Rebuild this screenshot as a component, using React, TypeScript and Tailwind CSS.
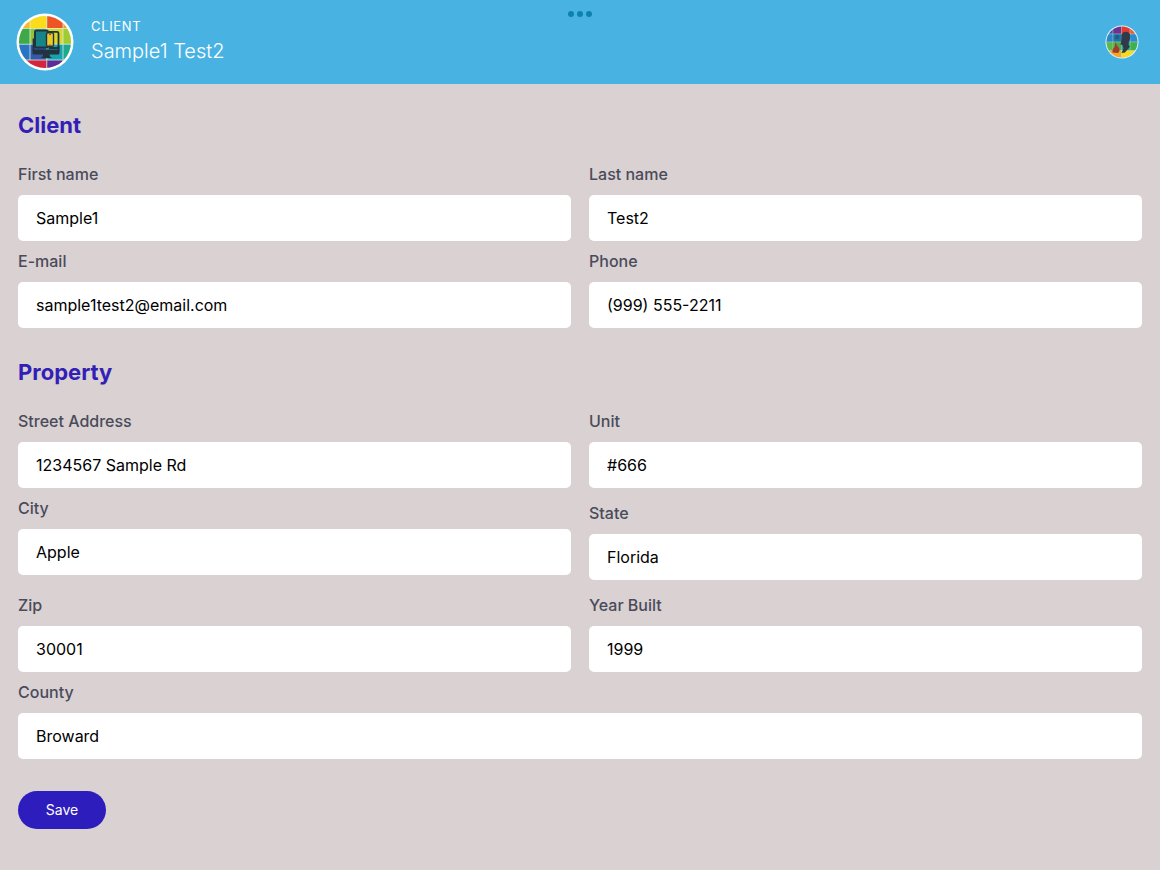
import { useId, useState } from 'react';

type FieldProps = {
  label: string;
  initial: string;
  type?: string;
  className?: string;
};

function Field({ label, initial, type = 'text', className = '' }: FieldProps) {
  const id = useId();
  const [value, setValue] = useState(initial);
  return (
    <div className={`flex flex-col gap-[9px] ${className}`}>
      <label htmlFor={id} className="text-base leading-6 font-medium text-[#4a4b5a]">
        {label}
      </label>
      <input
        id={id}
        type={type}
        value={value}
        onChange={(e) => setValue(e.target.value)}
        className="h-[46px] w-full rounded-[5px] bg-white px-[18px] text-base text-black outline-none focus:ring-2 focus:ring-[#2e1dbd]"
      />
    </div>
  );
}

function ClientLogo() {
  return (
    <svg viewBox="0 0 58 58" className="size-[58px] shrink-0" role="img" aria-label="Client logo">
      <defs>
        <clipPath id="client-logo-clip">
          <circle cx="29" cy="29" r="26" />
        </clipPath>
      </defs>
      <circle cx="29" cy="29" r="28.5" fill="#fff" />
      <g clipPath="url(#client-logo-clip)">
        <rect width="58" height="58" fill="#d9efe0" />
        <rect x="0" y="0" width="13.6" height="15" fill="#f9b81c" />
        <rect x="14.4" y="0" width="16" height="15" fill="#fbdc1c" />
        <rect x="31.2" y="0" width="15.4" height="15" fill="#ee5525" />
        <rect x="47.4" y="0" width="11" height="15" fill="#f59a23" />
        <rect x="0" y="15.8" width="13.6" height="15" fill="#3fa948" />
        <rect x="14.4" y="15.8" width="16" height="15" fill="#8dc63a" />
        <rect x="31.2" y="15.8" width="15.4" height="15" fill="#d8d92c" />
        <rect x="47.4" y="15.8" width="11" height="15" fill="#a0cb32" />
        <rect x="0" y="31.6" width="13.6" height="15" fill="#2a75c3" />
        <rect x="14.4" y="31.6" width="16" height="15" fill="#3359a8" />
        <rect x="31.2" y="31.6" width="15.4" height="15" fill="#16a3ad" />
        <rect x="47.4" y="31.6" width="11" height="15" fill="#20a88f" />
        <rect x="0" y="47.4" width="30.4" height="11" fill="#d5243f" />
        <rect x="31.2" y="47.4" width="15.4" height="11" fill="#5a2f97" />
        <rect x="47.4" y="47.4" width="11" height="11" fill="#7b2f97" />
      </g>
      <rect x="19" y="17.5" width="13" height="17" rx="1.5" fill="#15858a" stroke="#22333f" strokeWidth="2" />
      <path d="M33 18.8h8a1.5 1.5 0 0 1 1.5 1.5V35H33" fill="none" stroke="#22333f" strokeWidth="1.8" />
      <path d="M19 26.5h-1.500v11M42.500 33v5" fill="none" stroke="#22333f" strokeWidth="1.800" />
      <path d="M16.500 36.500h27v3.500a1.500 1.500 0 0 1-1.500 1.500h-8.500l.7 2.200 2 1.300H24.500l2-1.300.7-2.200H18a1.500 1.500 0 0 1-1.500-1.500z" fill="#22333f" />
      <rect x="30.500" y="19.800" width="7" height="13.500" rx="1.300" fill="#ecc926" stroke="#22333f" strokeWidth="1.400" />
      <path d="M33 21.600h2M33.500 31.600h1" stroke="#22333f" strokeWidth=".7" />
    </svg>
  );
}

function ProfilePicture() {
  return (
    <svg viewBox="0 0 34 34" className="size-[34px]" aria-hidden="true">
      <defs>
        <clipPath id="profile-clip">
          <circle cx="17" cy="17" r="15.5" />
        </clipPath>
      </defs>
      <circle cx="17" cy="17" r="16.5" fill="#e8f6fb" />
      <g clipPath="url(#profile-clip)">
        <rect width="34" height="34" fill="#a9d6d0" />
        <rect x="0" y="0" width="7.700" height="8.700" fill="#3d5db0" />
        <rect x="8.200" y="0" width="7.800" height="8.700" fill="#6c3192" />
        <rect x="16.500" y="0" width="8.300" height="8.700" fill="#e23a30" />
        <rect x="25.300" y="0" width="9" height="8.700" fill="#ef5a2a" />
        <rect x="0" y="9.200" width="7.700" height="7.500" fill="#2c86c8" />
        <rect x="8.200" y="9.200" width="7.800" height="7.500" fill="#1d78a8" />
        <rect x="16.500" y="9.200" width="8.300" height="7.500" fill="#4b4b9e" />
        <rect x="25.300" y="9.200" width="9" height="7.500" fill="#2a8ccb" />
        <rect x="0" y="17.200" width="7.700" height="8" fill="#5cb848" />
        <rect x="8.200" y="17.200" width="7.800" height="8" fill="#56a94a" />
        <rect x="16.500" y="17.200" width="8.300" height="8" fill="#26a77d" />
        <rect x="25.300" y="17.200" width="9" height="8" fill="#3fb04c" />
        <rect x="0" y="25.700" width="16" height="9" fill="#f5a623" />
        <rect x="16.500" y="25.700" width="18" height="9" fill="#fbd91f" />
      </g>
      <path d="M16.500 9.500c1-3 6-4 8-1 1.500 2.500.8 5.500-.5 7.500l-.5 4 1.500 1.500-5 6-3.500.5 2-4.500-1-3.500-2-.5.8-4z" fill="#303a48" />
      <path d="M7.500 27.500c-.5-3 1-4.500 2.500-6l.5-4.500 1.500 3.500 2 2.500c1 2 .5 4-1 5z" fill="#a33a2a" />
      <path d="M10 10.500l3-1 1.500 2-1 2.500-3 .3z" fill="#235a86" />
    </svg>
  );
}

export default function App() {
  return (
    <div className="min-h-screen bg-[#d9d1d2] font-['Inter',sans-serif]">
      <header className="relative flex h-[84px] items-center justify-between bg-[#48b3e3] pr-[21px] pl-4">
        <div className="flex items-center gap-[17px]">
          <ClientLogo />
          <div className="text-white">
            <p className="text-[13px] leading-[18px] tracking-wider">CLIENT</p>
            <h1 className="text-xl leading-8 font-light">Sample1 Test2</h1>
          </div>
        </div>
        <button type="button" aria-label="Multitasking" className="absolute top-[11px] left-1/2 flex -translate-x-1/2 gap-[3px]">
          <span className="size-1.5 rounded-full bg-[#0c82b0]" />
          <span className="size-1.5 rounded-full bg-[#0c82b0]" />
          <span className="size-1.5 rounded-full bg-[#0c82b0]" />
        </button>
        <button type="button" aria-label="Profile">
          <ProfilePicture />
        </button>
      </header>

      <form className="px-[18px] pt-[25px] pb-10" onSubmit={(e) => e.preventDefault()}>
        <section>
          <h2 className="text-[22px] leading-8 font-bold text-[#331fb5]">Client</h2>
          <div className="mt-[21px] grid grid-cols-2 gap-x-[18px] gap-y-2">
            <Field label="First name" initial="Sample1" />
            <Field label="Last name" initial="Test2" />
            <Field label="E-mail" initial="sample1test2@email.com" type="email" />
            <Field label="Phone" initial="(999) 555-2211" type="tel" />
          </div>
        </section>

        <section className="mt-7">
          <h2 className="text-[22px] leading-8 font-bold text-[#331fb5]">Property</h2>
          <div className="mt-[21px] grid grid-cols-2 gap-x-[18px] gap-y-2">
            <Field label="Street Address" initial="1234567 Sample Rd" />
            <Field label="Unit" initial="#666" />
            <Field label="City" initial="Apple" />
            <Field label="State" initial="Florida" className="py-[5px]" />
            <Field label="Zip" initial="30001" />
            <Field label="Year Built" initial="1999" />
            <Field label="County" initial="Broward" className="col-span-2" />
          </div>
        </section>

        <button type="submit" className="mt-8 h-[38px] w-[88px] rounded-full bg-[#2e1dbd] text-sm text-white">
          Save
        </button>
      </form>
    </div>
  );
}
